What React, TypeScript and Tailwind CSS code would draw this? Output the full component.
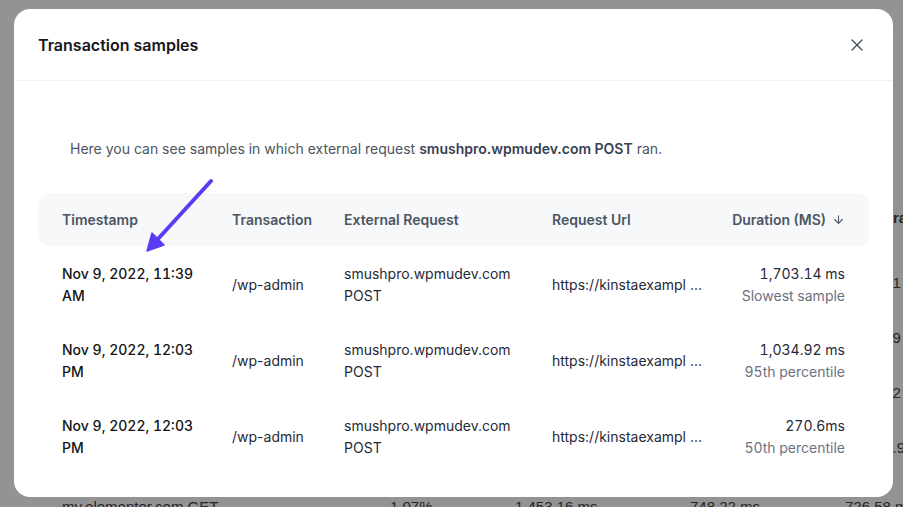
import { X, ArrowDown } from 'lucide-react';

const samples = [
  { time: 'Nov 9, 2022, 11:39 AM', tx: '/wp-admin', req: 'smushpro.wpmudev.com POST', url: 'https://kinstaexampl ...', ms: '1,703.14 ms', label: 'Slowest sample' },
  { time: 'Nov 9, 2022, 12:03 PM', tx: '/wp-admin', req: 'smushpro.wpmudev.com POST', url: 'https://kinstaexampl ...', ms: '1,034.92 ms', label: '95th percentile' },
  { time: 'Nov 9, 2022, 12:03 PM', tx: '/wp-admin', req: 'smushpro.wpmudev.com POST', url: 'https://kinstaexampl ...', ms: '270.6ms', label: '50th percentile' },
];

// the page that sits behind the dimmed overlay
const behind = ['884.01 ms', '867.59 ms', '853.42 ms', '9,824.9 ms'];

export default function App(){
  return (
    <div className="relative h-[507px] w-[903px] overflow-hidden bg-[#939393]" style={{fontFamily:'Inter, "Noto Sans", sans-serif'}}>
      <div className="pt-[198px] text-[15px] text-[#262626]" style={{fontFamily:'"Liberation Sans", Arial, sans-serif'}}>
        <div className="h-[58px] flex items-start">
          <div className="h-[40px] flex items-center pl-[873px] font-bold">Duration</div>
        </div>
        {behind.map((v,i)=>(
          <div key={i} className="h-[55px] flex items-center pl-[855px] whitespace-nowrap">{v}</div>
        ))}
        <div className="h-[62px] flex items-center whitespace-nowrap">
          <span className="w-[390px] shrink-0 pl-[62px]">my.elementor.com GET</span>
          <span className="w-[125px] shrink-0">1.07%</span>
          <span className="w-[175px] shrink-0">1,453.16 ms</span>
          <span className="w-[155px] shrink-0">748.22 ms</span>
          <span>726.58 ms</span>
        </div>
      </div>

      <div className="absolute left-[14px] top-[9px] w-[879px] h-[488px] rounded-[16px] bg-white flex flex-col">
        <div className="h-[72px] shrink-0 flex items-center justify-between pl-[24px] pr-[26px] border-b border-[#f1f1f3]">
          <h2 className="text-[16px] font-semibold text-[#16161a]">Transaction samples</h2>
          <X size={20} strokeWidth={1.75} className="text-[#4b5563]" />
        </div>
        <div className="px-[24px]">
          <p className="pt-[58px] px-[32px] text-[14px] leading-[20px] text-[#4b5563]">
            Here you can see samples in which external request <b className="font-semibold text-[#374151]">smushpro.wpmudev.com POST</b> ran.
          </p>
          <div className="mt-[34px]">
            <div className="h-[53px] rounded-[12px] bg-[#f7f8fa] flex items-center px-[24px] text-[14px] font-semibold text-[#4b5563]">
              <div className="w-[170px]">Timestamp</div>
              <div className="w-[112px]">Transaction</div>
              <div className="w-[208px]">External Request</div>
              <div className="w-[170px]">Request Url</div>
              <div className="flex-1 flex items-center justify-end gap-[6px]">Duration (MS) <ArrowDown size={13} strokeWidth={2} /></div>
            </div>
            {samples.map((s,i)=>(
              <div key={i} className="h-[76px] pt-[2px] flex items-center px-[24px] text-[14px] leading-[22px] text-[#1f2937]">
                <div className="w-[170px] pr-[24px] font-medium text-[#151515] tabular-nums">{s.time}</div>
                <div className="w-[112px]">{s.tx}</div>
                <div className="w-[208px] pr-[24px]">{s.req}</div>
                <div className="w-[170px] whitespace-nowrap">{s.url}</div>
                <div className="flex-1 text-right tabular-nums">
                  <div>{s.ms}</div>
                  <div className="text-[#6b7280]">{s.label}</div>
                </div>
              </div>
            ))}
          </div>
        </div>
      </div>

      <svg className="absolute left-[140px] top-[175px]" width="80" height="85" viewBox="0 0 80 85">
        <line x1="71" y1="6" x2="17" y2="65" stroke="#5b3cf4" strokeWidth="4" strokeLinecap="round" />
        <polygon points="7,76 24,70 12,58" fill="#5b3cf4" stroke="#5b3cf4" strokeWidth="1.5" strokeLinejoin="round" />
      </svg>
    </div>
  );
}
